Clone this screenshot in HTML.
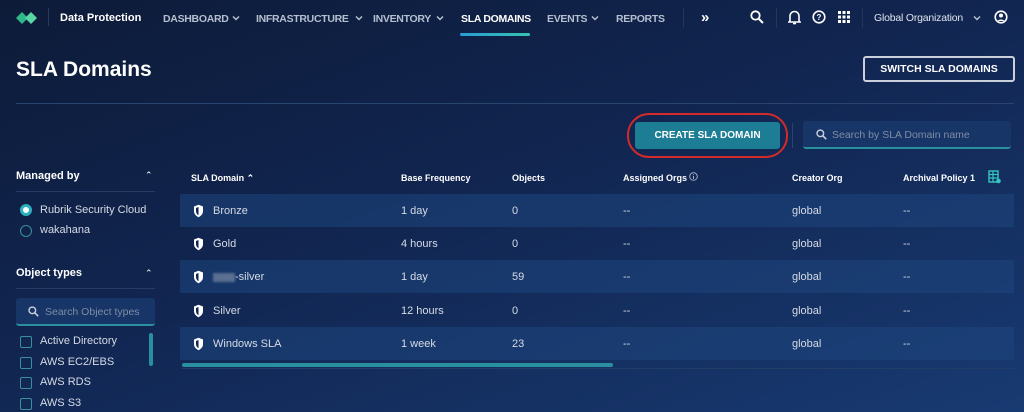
<!DOCTYPE html>
<html><head><meta charset="utf-8"><style>
*{margin:0;padding:0;box-sizing:border-box}
body{width:1024px;height:412px;overflow:hidden;font-family:"Liberation Sans",sans-serif;color:#e6ebf3;
background:linear-gradient(160deg,#0d1b38 0%,#112550 45%,#183a72 100%);position:relative}
.a{position:absolute;white-space:nowrap}
.nav{font-size:10.5px;font-weight:bold;color:#b5bfd0;top:13px;letter-spacing:-0.3px}
.chev{position:absolute;top:15px}
.hd{font-size:9px;font-weight:bold;color:#fff;top:173px}
.row{position:absolute;left:180px;width:834px;height:33px}
.row.s{background:rgba(30,70,125,.55)}
.c{position:absolute;top:11px;font-size:11px;color:#d5dbe6}
.sh{position:absolute;left:13px;top:10px;width:11px;height:14px}
.cb{position:absolute;left:20px;width:12px;height:12px;border:1.5px solid #3a8f9d;border-radius:2px}
.lab{font-size:11px;color:#d5dbe6}
</style></head><body>
<svg width="0" height="0" style="position:absolute"><defs><symbol id="cv" viewBox="0 0 8 6"><path d="M1 1.5L4 4.5L7 1.5" fill="none" stroke="#b5bfd0" stroke-width="1.5"/></symbol></defs></svg>
<svg class="a" style="left:16px;top:11px" width="22" height="14" viewBox="0 0 22 14"><path d="M0 7 L6 1 L12 7 L6 13Z" fill="#2fb88a"/><path d="M9 7 L15 1 L21 7 L15 13Z" fill="#5ad6a6"/></svg>
<div class="a" style="left:48px;top:8px;width:1px;height:18px;background:#2a3a5c"></div>
<div class="a" style="left:60px;top:12px;font-size:11px;font-weight:bold;color:#fff">Data Protection</div>
<div class="a nav" style="left:163px">DASHBOARD</div><svg class="chev" style="left:232px" width="8" height="6"><use href="#cv"/></svg>
<div class="a nav" style="left:256px">INFRASTRUCTURE</div><svg class="chev" style="left:355px" width="8" height="6"><use href="#cv"/></svg>
<div class="a nav" style="left:373px">INVENTORY</div><svg class="chev" style="left:436px" width="8" height="6"><use href="#cv"/></svg>
<div class="a nav" style="left:461px;color:#fff">SLA DOMAINS</div>
<div class="a" style="left:460px;top:33px;width:70px;height:3px;border-radius:2px;background:linear-gradient(90deg,#2a9bd6,#36c4b0)"></div>
<div class="a nav" style="left:547px">EVENTS</div><svg class="chev" style="left:591px" width="8" height="6"><use href="#cv"/></svg>
<div class="a nav" style="left:616px">REPORTS</div>
<div class="a" style="left:683px;top:8px;width:1px;height:20px;background:#26365a"></div>
<div class="a" style="left:701px;top:9px;font-size:15px;font-weight:bold;color:#fff">»</div>
<svg class="a" style="left:750px;top:10px" width="14" height="14" viewBox="0 0 14 14"><circle cx="5.5" cy="5.5" r="4.2" fill="none" stroke="#fff" stroke-width="1.8"/><path d="M8.5 8.5L13 13" stroke="#fff" stroke-width="2"/></svg>
<div class="a" style="left:776px;top:8px;width:1px;height:20px;background:#26365a"></div>
<svg class="a" style="left:788px;top:10px" width="13" height="15" viewBox="0 0 13 15"><path d="M2 11V6a4.5 4.5 0 0 1 9 0v5l1 1H1z" fill="none" stroke="#fff" stroke-width="1.6"/><path d="M5 13.5h3" stroke="#fff" stroke-width="1.6"/></svg>
<svg class="a" style="left:812px;top:10px" width="14" height="14" viewBox="0 0 14 14"><circle cx="7" cy="7" r="5.8" fill="none" stroke="#fff" stroke-width="1.6"/><text x="7" y="10" font-size="8" font-weight="bold" fill="#fff" text-anchor="middle" font-family="Liberation Sans">?</text></svg>
<svg class="a" style="left:838px;top:11px" width="12" height="12" viewBox="0 0 12 12" fill="#fff"><rect x="0" y="0" width="3" height="3"/><rect x="4.5" y="0" width="3" height="3"/><rect x="9" y="0" width="3" height="3"/><rect x="0" y="4.5" width="3" height="3"/><rect x="4.5" y="4.5" width="3" height="3"/><rect x="9" y="4.5" width="3" height="3"/><rect x="0" y="9" width="3" height="3"/><rect x="4.5" y="9" width="3" height="3"/><rect x="9" y="9" width="3" height="3"/></svg>
<div class="a" style="left:862px;top:8px;width:1px;height:20px;background:#26365a"></div>
<div class="a" style="left:874px;top:12px;font-size:10.5px;color:#dfe5ee;letter-spacing:-0.2px">Global Organization</div>
<svg class="chev" style="left:973px;top:15px" width="8" height="6"><use href="#cv"/></svg>
<svg class="a" style="left:994px;top:10px" width="14" height="14" viewBox="0 0 14 14"><circle cx="7" cy="7" r="5.8" fill="none" stroke="#fff" stroke-width="1.6"/><circle cx="7" cy="5.5" r="2" fill="#fff"/><path d="M3.5 11a4 3 0 0 1 7 0" fill="#fff"/></svg>

<div class="a" style="left:16px;top:58px;font-size:21px;font-weight:bold;color:#fff">SLA Domains</div>
<div class="a" style="left:863px;top:56px;width:152px;height:26px;border:2px solid #c9d0dc;border-radius:3px;font-size:10.5px;font-weight:bold;color:#fff;text-align:center;line-height:22px">SWITCH SLA DOMAINS</div>
<div class="a" style="left:16px;top:103px;width:998px;height:1px;background:#2a4470"></div>

<div class="a" style="left:627px;top:113px;width:161px;height:45px;border:2px solid #d42a2a;border-radius:22px"></div>
<div class="a" style="left:635px;top:122px;width:145px;height:27px;background:#1c7d94;border-radius:3px;font-size:10px;font-weight:bold;color:#fff;text-align:center;line-height:27px">CREATE SLA DOMAIN</div>
<div class="a" style="left:792px;top:123px;width:1px;height:25px;background:#2a4470"></div>
<div class="a" style="left:803px;top:121px;width:208px;height:28px;background:#173566;border-bottom:2px solid #2a8f9e;border-radius:3px"></div>
<svg class="a" style="left:816px;top:129px" width="11" height="11" viewBox="0 0 14 14"><circle cx="5.5" cy="5.5" r="4.2" fill="none" stroke="#c9d0dc" stroke-width="1.8"/><path d="M8.5 8.5L13 13" stroke="#c9d0dc" stroke-width="2"/></svg>
<div class="a" style="left:832px;top:129px;font-size:10.5px;color:#7f8ca6">Search by SLA Domain name</div>

<div class="a" style="left:16px;top:170px;font-size:11px;font-weight:bold;color:#fff">Managed by</div>
<div class="a" style="left:145px;top:170px;font-size:9px;color:#fff">⌃</div>
<div class="a" style="left:16px;top:191px;width:139px;height:1px;background:#253d66"></div>
<div class="a" style="left:20px;top:204px;width:12px;height:12px;border-radius:50%;background:#fff;border:3px solid #2bb0c0"></div>
<div class="a lab" style="left:40px;top:204px">Rubrik Security Cloud</div>
<div class="a" style="left:20px;top:225px;width:12px;height:12px;border-radius:50%;border:1.5px solid #3a8f9d"></div>
<div class="a lab" style="left:40px;top:224px">wakahana</div>
<div class="a" style="left:16px;top:267px;font-size:11px;font-weight:bold;color:#fff">Object types</div>
<div class="a" style="left:145px;top:268px;font-size:9px;color:#fff">⌃</div>
<div class="a" style="left:16px;top:288px;width:139px;height:1px;background:#253d66"></div>
<div class="a" style="left:16px;top:298px;width:139px;height:28px;background:#173566;border-bottom:2px solid #2a8f9e;border-radius:3px"></div>
<svg class="a" style="left:28px;top:306px" width="11" height="11" viewBox="0 0 14 14"><circle cx="5.5" cy="5.5" r="4.2" fill="none" stroke="#c9d0dc" stroke-width="1.8"/><path d="M8.5 8.5L13 13" stroke="#c9d0dc" stroke-width="2"/></svg>
<div class="a" style="left:45px;top:306px;font-size:10.5px;color:#7f8ca6">Search Object types</div>
<div class="cb" style="top:336px"></div><div class="a lab" style="left:40px;top:335px">Active Directory</div>
<div class="cb" style="top:357px"></div><div class="a lab" style="left:40px;top:356px">AWS EC2/EBS</div>
<div class="cb" style="top:377px"></div><div class="a lab" style="left:40px;top:376px">AWS RDS</div>
<div class="cb" style="top:398px"></div><div class="a lab" style="left:40px;top:397px">AWS S3</div>
<div class="a" style="left:149px;top:333px;width:4px;height:33px;border-radius:2px;background:#2a8f9e"></div>

<div class="a hd" style="left:191px">SLA Domain ⌃</div>
<div class="a hd" style="left:401px">Base Frequency</div>
<div class="a hd" style="left:512px">Objects</div>
<div class="a hd" style="left:623px">Assigned Orgs</div>
<svg class="a" style="left:689px;top:172px" width="9" height="9" viewBox="0 0 9 9"><circle cx="4.5" cy="4.5" r="3.8" fill="none" stroke="#aab4c4" stroke-width="0.9"/><path d="M4.5 4v3M4.5 2.3v.8" stroke="#aab4c4" stroke-width="1"/></svg>
<div class="a hd" style="left:792px">Creator Org</div>
<div class="a hd" style="left:903px">Archival Policy 1</div>
<svg class="a" style="left:988px;top:170px" width="13" height="14" viewBox="0 0 13 14"><rect x="1" y="1" width="9" height="11" fill="none" stroke="#36c4c0" stroke-width="1.4"/><path d="M1 4.5h9M1 8h9M5 1v11" stroke="#36c4c0" stroke-width="1.2"/><circle cx="10.5" cy="11" r="2.3" fill="#36c4c0"/></svg>

<div class="row s" style="top:194px"></div>
<div class="row" style="top:227px"></div>
<div class="row s" style="top:260px"></div>
<div class="row" style="top:294px"></div>
<div class="row s" style="top:327px"></div>

<div class="a" style="left:182px;top:363px;width:431px;height:4px;border-radius:2px;background:#2a8f9e"></div>
<div class="a" style="left:182px;top:368px;width:832px;height:1px;background:#223d68"></div>

<div class="row" style="top:194px">
<svg class="sh" viewBox="0 0 11 14"><path d="M5.5 0.8L10 2.5V7c0 3-2 5-4.5 6.2C3 12 1 10 1 7V2.5z" fill="#fff"/><path d="M5.5 3v8.3C4 10.4 3 9 3 7V4z" fill="#10254f"/></svg>
<div class="c" style="left:33px">Bronze</div><div class="c" style="left:221px">1 day</div><div class="c" style="left:332px">0</div><div class="c" style="left:443px">--</div><div class="c" style="left:612px">global</div><div class="c" style="left:723px">--</div></div>
<div class="row" style="top:227px">
<svg class="sh" viewBox="0 0 11 14"><path d="M5.5 0.8L10 2.5V7c0 3-2 5-4.5 6.2C3 12 1 10 1 7V2.5z" fill="#fff"/><path d="M5.5 3v8.3C4 10.4 3 9 3 7V4z" fill="#10254f"/></svg>
<div class="c" style="left:33px">Gold</div><div class="c" style="left:221px">4 hours</div><div class="c" style="left:332px">0</div><div class="c" style="left:443px">--</div><div class="c" style="left:612px">global</div><div class="c" style="left:723px">--</div></div>
<div class="row" style="top:260px">
<svg class="sh" viewBox="0 0 11 14"><path d="M5.5 0.8L10 2.5V7c0 3-2 5-4.5 6.2C3 12 1 10 1 7V2.5z" fill="#fff"/><path d="M5.5 3v8.3C4 10.4 3 9 3 7V4z" fill="#10254f"/></svg>
<div class="a" style="left:33px;top:13px;width:22px;height:9px;background:#5a6f92;filter:blur(1px)"></div>
<div class="c" style="left:55px">-silver</div><div class="c" style="left:221px">1 day</div><div class="c" style="left:332px">59</div><div class="c" style="left:443px">--</div><div class="c" style="left:612px">global</div><div class="c" style="left:723px">--</div></div>
<div class="row" style="top:294px">
<svg class="sh" viewBox="0 0 11 14"><path d="M5.5 0.8L10 2.5V7c0 3-2 5-4.5 6.2C3 12 1 10 1 7V2.5z" fill="#fff"/><path d="M5.5 3v8.3C4 10.4 3 9 3 7V4z" fill="#10254f"/></svg>
<div class="c" style="left:33px">Silver</div><div class="c" style="left:221px">12 hours</div><div class="c" style="left:332px">0</div><div class="c" style="left:443px">--</div><div class="c" style="left:612px">global</div><div class="c" style="left:723px">--</div></div>
<div class="row" style="top:327px">
<svg class="sh" viewBox="0 0 11 14"><path d="M5.5 0.8L10 2.5V7c0 3-2 5-4.5 6.2C3 12 1 10 1 7V2.5z" fill="#fff"/><path d="M5.5 3v8.3C4 10.4 3 9 3 7V4z" fill="#10254f"/></svg>
<div class="c" style="left:33px">Windows SLA</div><div class="c" style="left:221px">1 week</div><div class="c" style="left:332px">23</div><div class="c" style="left:443px">--</div><div class="c" style="left:612px">global</div><div class="c" style="left:723px">--</div></div>
</body></html>
